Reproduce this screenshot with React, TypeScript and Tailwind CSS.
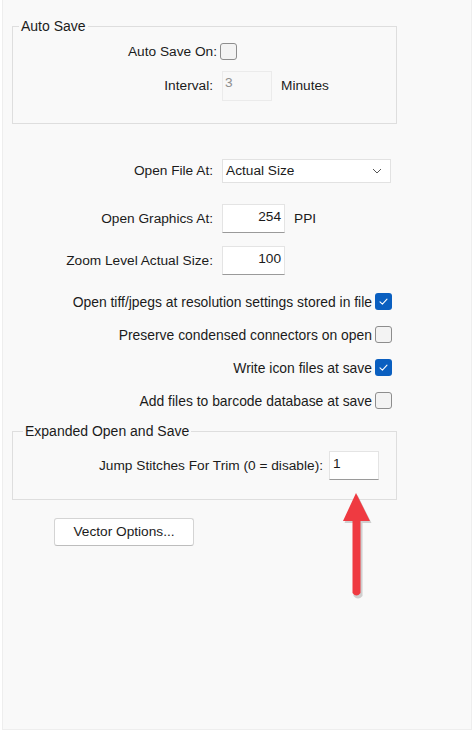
import React from 'react'

const font = { fontFamily: '"Liberation Sans", Arial, sans-serif' }

function Check({ checked }: { checked?: boolean }) {
  return checked ? (
    <span className="flex h-[17px] w-[17px] items-center justify-center rounded-[3px] bg-[#0a5fc0]">
      <svg width="11" height="11" viewBox="0 0 11 11" fill="none">
        <path d="M2 5.8l2.4 2.3L9 3.2" stroke="#fff" strokeWidth="1.1" strokeLinecap="round" strokeLinejoin="round" />
      </svg>
    </span>
  ) : (
    <span className="block h-[17px] w-[17px] rounded-[3px] border border-[#8d8d8d] bg-[#f3f3f3]" />
  )
}

function TextBox({ value, w, align = 'right' }: { value: string; w: string; align?: 'left' | 'right' }) {
  return (
    <div
      className={`flex h-[29px] ${w} items-start border border-[#e4e4e4] border-b-[#9a9a9a] bg-white pt-[4px] ${
        align === 'right' ? 'justify-end pr-[3px]' : 'pl-[3px]'
      }`}
    >
      {value}
    </div>
  )
}

function CheckRow({ label, checked }: { label: string; checked?: boolean }) {
  return (
    <div className="flex h-[17px] w-[389px] items-center justify-end gap-[3px] text-[13.9px]">
      <span>{label}</span>
      <Check checked={checked} />
    </div>
  )
}

export default function App() {
  return (
    <div className="relative h-[733px] w-[474px] bg-white text-[13.7px] leading-[16px] text-[#1b1b1b]" style={font}>
      <div className="ml-[2px] flex h-[730px] w-[470px] flex-col border-l border-b border-r border-[#eeeeee] bg-[#f9f9f9]">
        {/* Auto Save group */}
        <fieldset className="ml-[9px] mt-[18px] w-[385px] border border-[#dedede] pb-[22px]">
          <legend className="ml-[6px] px-[2px] text-[14px]">Auto Save</legend>
          <div className="mt-[9px] flex items-center">
            <span className="w-[204px] text-right">Auto Save On:</span>
            <span className="ml-[3px]">
              <Check />
            </span>
          </div>
          <div className="mt-[11px] flex items-center">
            <span className="w-[200px] text-right">Interval:</span>
            <div className="ml-[9px] h-[30px] w-[50px] border border-[#ebebeb] bg-[#f8f8f8] pl-[2px] pt-[3px] text-[#8f8f8f]">3</div>
            <span className="ml-[9px]">Minutes</span>
          </div>
        </fieldset>

        {/* Open File At */}
        <div className="mt-[35px] flex items-center">
          <span className="w-[210px] text-right">Open File At:</span>
          <div className="ml-[9px] flex h-[24px] w-[169px] items-center justify-between border border-[#e2e2e2] bg-white pl-[3px] pr-[8px]">
            <span>Actual Size</span>
            <svg width="10" height="6" viewBox="0 0 10 6" fill="none">
              <path d="M1 1l4 4 4-4" stroke="#555" strokeWidth="1" />
            </svg>
          </div>
        </div>

        <div className="mt-[21px] flex items-center">
          <span className="w-[210px] text-right">Open Graphics At:</span>
          <div className="ml-[9px]">
            <TextBox value="254" w="w-[63px]" />
          </div>
          <span className="ml-[9px]">PPI</span>
        </div>

        <div className="mt-[13px] flex items-center">
          <span className="w-[210px] text-right">Zoom Level Actual Size:</span>
          <div className="ml-[9px]">
            <TextBox value="100" w="w-[63px]" />
          </div>
        </div>

        <div className="mt-[18px] flex flex-col gap-[16px]">
          <CheckRow label="Open tiff/jpegs at resolution settings stored in file" checked />
          <CheckRow label="Preserve condensed connectors on open" />
          <CheckRow label="Write icon files at save" checked />
          <CheckRow label="Add files to barcode database at save" />
        </div>

        {/* Expanded Open and Save group */}
        <fieldset className="ml-[9px] mt-[14px] w-[385px] border border-[#dedede] pb-[19px]">
          <legend className="ml-[10px] px-[2px] text-[14px]">Expanded Open and Save</legend>
          <div className="mt-[12px] flex items-center">
            <span className="w-[310px] text-right">Jump Stitches For Trim (0 = disable):</span>
            <div className="ml-[6px]">
              <TextBox value="1" w="w-[50px]" align="left" />
            </div>
          </div>
        </fieldset>

        <button className="ml-[51px] mt-[18px] h-[28px] w-[140px] rounded-[3px] border border-[#d4d4d4] border-b-[#bdbdbd] bg-white">
          Vector Options...
        </button>
      </div>

      {/* red arrow callout */}
      <svg className="absolute left-[336px] top-[488px]" width="42" height="116" viewBox="0 0 42 116" fill="none">
        <g opacity="0.25" transform="translate(1.5 2)">
          <path d="M20 5 L34 33 L25 33 L25 106 Q20.5 111 16 106 L16 33 L7 33 Z" fill="#555" />
        </g>
        <path d="M20 5 L34 33 L24.5 33 L24.5 105 Q20.5 110 16.5 105 L16.5 33 L7 33 Z" fill="#ef3a41" />
      </svg>
    </div>
  )
}
